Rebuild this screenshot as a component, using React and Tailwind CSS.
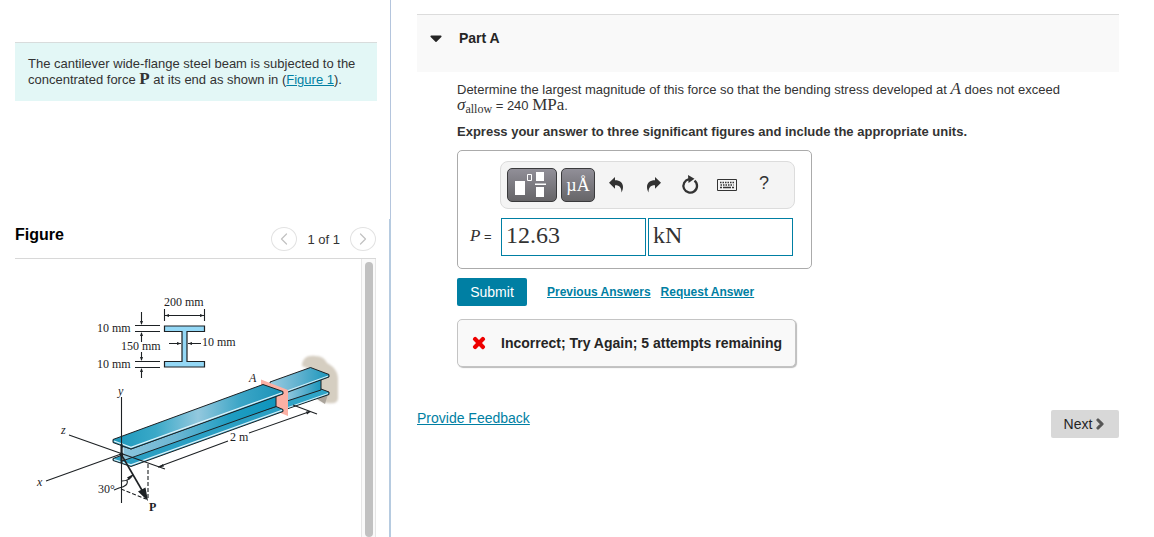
import React, { useState } from 'react';
import { FaCaretDown, FaChevronRight, FaTimes } from 'react-icons/fa';
import { ChevronLeft, ChevronRight } from 'lucide-react';

const MATH = "font-['Liberation_Serif',serif]";
const INLINE_MATH = `${MATH} text-[17px] leading-[12px]`;

function BeamFigure() {
  return (
    <svg
      viewBox="15 259 346 278"
      className="w-[346px] h-[278px] shrink-0 font-['Liberation_Serif',serif] text-[12px]"
      role="img"
      aria-label="Cantilever wide-flange beam with force P at its end"
    >
      <defs>
        <linearGradient id="nearTop" x1="0" x2="1">
          <stop offset="0" stopColor="#1c97bb" />
          <stop offset="0.25" stopColor="#3aa9c8" />
          <stop offset="0.5" stopColor="#93c8de" />
          <stop offset="0.75" stopColor="#3ba5c6" />
          <stop offset="1" stopColor="#1b93b8" />
        </linearGradient>
        <linearGradient id="nearWeb" x1="0" x2="1">
          <stop offset="0" stopColor="#8cc4dc" />
          <stop offset="0.35" stopColor="#6db7d3" />
          <stop offset="0.7" stopColor="#1f9dc2" />
          <stop offset="1" stopColor="#0f95bd" />
        </linearGradient>
        <linearGradient id="farTop" x1="0" x2="1">
          <stop offset="0" stopColor="#9acbe0" />
          <stop offset="0.5" stopColor="#5fb1cf" />
          <stop offset="1" stopColor="#1b96bb" />
        </linearGradient>
        <filter id="wallEdge" x="-20%" y="-20%" width="140%" height="140%">
          <feGaussianBlur stdDeviation="0.9" />
        </filter>
      </defs>

      {/* wall */}
      <path
        d="M302 366 C302 358 308 355 315 356 C322 356 325 359 327 363 C333 366 338 371 338 379 V398 C338 403 333 404 327 403 C320 402 316 398 315 394 L312 370 Z"
        fill="#d5cec1"
        filter="url(#wallEdge)"
      />
      <path d="M317 399 L328 394 L325 404 Z" fill="#aaa49b" />

      {/* far part of the beam */}
      <g stroke="#1d2124" strokeWidth="1" strokeLinejoin="round">
        <path d="M284 401 L321 389 L329 392 V394.500 L284 410 Z" fill="#2fa4c7" />
        <path d="M284 392 L321 379 V390 L284 402 Z" fill="url(#farTop)" />
        <path d="M270 382 L310.500 367.500 L329 374.500 V377 L288 392 L270 387 Z" fill="url(#farTop)" />
      </g>
      <path d="M288 390.500 L328 376 M288 407.500 L328 393.500" stroke="#d9f0f7" strokeWidth="1" />

      {/* section plane at A */}
      <path d="M261 379.500 L288 390 V416 L261 405 Z" fill="#fbb0a4" />

      {/* near part of the beam */}
      <g stroke="#1d2124" strokeWidth="1" strokeLinejoin="round">
        <path d="M113 458.500 L125 454 L276 406.500 L283 409.500 V411.500 L131 466.500 L113 460.500 Z" fill="#2b9fc3" />
        <path d="M122 446 L131 449 L276 396 V406.500 L125 460 L122 461 Z" fill="url(#nearWeb)" />
        <path d="M113 439.500 L263 384.500 L283 391.500 V394 L131 449 L113 442.500 Z" fill="url(#nearTop)" />
      </g>
      <path
        d="M114 441 L131 447.300 L282 392.700 M114 459.500 L131 464.800 L282 410.200 M123 448 V460"
        fill="none"
        stroke="#e3f4fa"
        strokeWidth="1.2"
      />

      {/* axes, force and dimension lines */}
      <g stroke="#1d2124" strokeWidth="1.1" fill="none">
        <path d="M121.500 397 V503" />
        <path d="M121.500 444 V463" strokeWidth="2" />
        <path d="M69 435 L165 469 M46 481 L121 454" />
        <path d="M121 454 L143 492" strokeWidth="1.6" />
        <path d="M148 464 V499 M121 489 L146 499" strokeDasharray="4 2" />
        <path d="M133 475 Q129 481 122 481 M114 490 L119 488 Q129 486 127 480" />
        <path d="M158 467 L228 441 M249 433 L310 411.500 M293 405 L317 414" />
      </g>
      <path d="M148 501 L138 491.500 L145.500 487.500 Z M133.500 474 L129 480 L127 477.500 Z M158 467.500 L163 464 L164 466.500 Z M311 411.300 L306 411.500 L307 414.500 Z" fill="#1d2124" />
      <circle cx="121.500" cy="454.500" r="2" fill="#1d2124" />

      {/* cross-section */}
      <path
        d="M164.500 326 H204.500 V331.500 H187 V361.500 H204.500 V367 H164.500 V361.500 H182 V331.500 H164.500 Z"
        fill="#94d8f6"
        stroke="#1d2124"
        strokeWidth="1.2"
      />
      <g stroke="#1d2124" strokeWidth="1.1" fill="none">
        <path d="M164.500 309 V321 M204.500 309 V321 M165 315.500 H204" />
        <path d="M135 325.500 H160 M135 331.500 H160 M135 361.500 H160 M135 367.500 H160" />
        <path d="M141.500 312 V324 M141.500 333 V342 M141.500 352 V360 M141.500 369 V378" />
        <path d="M169 343.500 H181 M188 343.500 H201" />
      </g>
      <path
        d="M141.500 325 L140 321 H143 Z M141.500 332 L140 336 H143 Z M141.500 361 L140 357 H143 Z M141.500 368 L140 372 H143 Z M181 343.500 L177 342 V345 Z M188 343.500 L192 342 V345 Z M165 315.500 L169 314 V317 Z M204 315.500 L200 314 V317 Z"
        fill="#1d2124"
      />

      <g fill="#1d2124">
        <text x="164" y="306">200 mm</text>
        <text x="97" y="332">10 mm</text>
        <text x="121" y="350">150 mm</text>
        <text x="97" y="368">10 mm</text>
        <text x="202" y="346">10 mm</text>
        <text x="230" y="441">2 m</text>
        <text x="98" y="493">30°</text>
        <g fontStyle="italic">
          <text x="118" y="395">y</text>
          <text x="61" y="434">z</text>
          <text x="37" y="486">x</text>
          <text x="249" y="382">A</text>
        </g>
        <text x="149" y="511" fontWeight="bold">P</text>
      </g>
    </svg>
  );
}

function Sidebar() {
  return (
    <aside className="w-[391px] shrink-0 flex flex-col">
      <div className="h-[219px] pt-[42px] pl-[15px] pr-[13px] border-r border-[#b4c5dd]">
        <p className="border-t border-[#d8dcdc] bg-[#e3f7f6] px-[13px] pt-[13px] pb-[13px] text-[13px] leading-[16px]">
          The cantilever wide-flange steel beam is subjected to the concentrated force{' '}
          <b className={INLINE_MATH}>P</b> at its end as shown in (
          <a href="#figure" className="text-[#007fa3] underline">Figure 1</a>).
        </p>
      </div>
      <section id="figure" className="flex-1 flex flex-col pl-[15px] pr-[13px] border-r-2 border-[#b6cbe0]">
        <div className="h-10 flex items-center border-b border-[#d8d8d8]">
          <h2 className="flex-1 pb-2 text-[16px] leading-[20px] font-bold text-black">Figure</h2>
          <div className="flex items-center gap-[10px] text-[13px]">
            <button aria-label="Previous figure" className="w-[26px] h-6 flex items-center justify-center rounded-[50%] border border-[#e2e2e2] text-[#c2c2c2]">
              <ChevronLeft size={20} strokeWidth={1.5} />
            </button>
            <span className="pt-[3px]">1 of 1</span>
            <button aria-label="Next figure" className="w-[26px] h-6 flex items-center justify-center rounded-[50%] border border-[#e2e2e2] text-[#c2c2c2]">
              <ChevronRight size={20} strokeWidth={1.5} />
            </button>
          </div>
        </div>
        <div className="flex-1 flex justify-between">
          <BeamFigure />
          <div className="w-[15px] shrink-0 flex justify-center pt-[3px] border-x border-[#e6e6e6] bg-[#fafafa]">
            <div className="w-2 rounded-full bg-[#c1c1c1]" />
          </div>
        </div>
      </section>
    </aside>
  );
}

const darkButton =
  'h-[34px] flex items-center justify-center rounded-[5px] border border-[#3a3a3c] bg-linear-to-b from-[#918f98] to-[#666568] text-white';

function Toolbar() {
  return (
    <div className="w-[295px] h-12 flex items-center px-[6px] rounded-lg border border-[#dcdcdc] bg-[#f4f4f4] text-[#333]">
      <button aria-label="Templates" className={`w-[50px] ${darkButton}`}>
        <svg width="34" height="28" viewBox="0 0 34 28">
          <path d="M0 10h10v14H0zM21 1h8v9h-8zM21 16h8v10h-8zM20 12.500h11v1.500H20z" fill="#fff" />
          <path d="M12.500 3.500h4v6h-4z" fill="none" stroke="#fff" />
        </svg>
      </button>
      <button aria-label="Units" className={`w-[34px] ml-1 ${darkButton} ${MATH} text-[18px]`}>µÅ</button>
      <button aria-label="Undo" className="w-[14px] ml-[14px]">
        <svg width="14" height="16" viewBox="0 0 14 16" fill="currentColor">
          <path d="M6 0v3.200c5 0 8 2.600 8 6.800 0 2.200-.7 4-1.600 5.500.2-4.600-1.600-7.200-6.400-7.200v3.400L0 5.800z" />
        </svg>
      </button>
      <button aria-label="Redo" className="w-[14px] ml-[24px]">
        <svg width="14" height="16" viewBox="0 0 14 16" fill="currentColor">
          <path d="M8 0v3.200c-5 0-8 2.600-8 6.800 0 2.200.7 4 1.600 5.500C1.400 10.900 3.200 8.300 8 8.300v3.400l6-5.900z" />
        </svg>
      </button>
      <button aria-label="Reset" className="w-[18px] ml-[20px]">
        <svg width="18" height="20" viewBox="0 0 18 20">
          <path d="M13.500 5.600A6.800 6.800 0 1 1 8 4.200" fill="none" stroke="currentColor" strokeWidth="2.300" />
          <path d="M7 0l6.500 3.800L7.500 8z" fill="currentColor" />
        </svg>
      </button>
      <button aria-label="Keyboard" className="w-5 ml-[18px]">
        <svg width="20" height="12" viewBox="0 0 20 12" stroke="currentColor" fill="none">
          <path d="M.5.5h19v11H.5z" />
          <path d="M3 3.500h14M3.500 6h13" strokeWidth="1.500" strokeDasharray="1.500 1" />
          <path d="M3 8.500h2M6 8.500h8M15 8.500h2" strokeWidth="1.500" />
        </svg>
      </button>
      <button aria-label="Help" className="ml-[21px] w-3 text-[18px] leading-[20px] pb-1">?</button>
    </div>
  );
}

export default function App() {
  const [value, setValue] = useState('12.63');
  const [unit, setUnit] = useState('kN');

  const field = `h-[38px] w-[145px] px-1 pb-[3px] border border-[#007fa3] bg-white ${MATH} text-[24px] text-[#333] outline-none`;

  return (
    <div className="min-h-screen flex bg-white font-['Liberation_Sans',Arial,sans-serif] text-[#333]">
      <Sidebar />
      <main className="flex-1 pt-[14px] pl-[26px] pr-[35px]">
        <h2 className="h-[58px] border-t border-[#dcdcdc] bg-[#f9f9f9]">
          <button className="flex items-center pt-[14px] pl-[13px] text-[14px] leading-[18px] font-bold text-[#252525]">
            <FaCaretDown size={18} className="w-3 mr-[17px]" viewBox="0 0 320 512" preserveAspectRatio="xMidYMid slice" />
            Part A
          </button>
        </h2>

        <div className="pl-10 pt-[10px]">
          <p className="text-[13px] leading-[16px]">
            Determine the largest magnitude of this force so that the bending stress developed at{' '}
            <i className={INLINE_MATH}>A</i> does not exceed
            <br />
            <i className={INLINE_MATH}>σ</i>
            <sub className={`${MATH} text-[12px]`}>allow</sub> = 240{' '}
            <span className={INLINE_MATH}>MPa</span>.
          </p>
          <p className="mt-[10px] text-[13px] leading-[16px] font-bold">
            Express your answer to three significant figures and include the appropriate units.
          </p>

          <div className="mt-[10px] w-fit pt-[10px] pb-3 pl-[10px] pr-4 rounded-[5px] border border-[#ababab]">
            <div className="pl-8">
              <Toolbar />
            </div>
            <div className="mt-[9px] flex items-center gap-[2px]">
              <label htmlFor="answer" className="w-[31px] pl-[2px] text-[13px] whitespace-nowrap">
                <i className={INLINE_MATH}>P</i> =
              </label>
              <input id="answer" className={field} value={value} onChange={(e) => setValue(e.target.value)} />
              <input aria-label="Units" className={field} value={unit} onChange={(e) => setUnit(e.target.value)} />
            </div>
          </div>

          <div className="mt-[9px] flex items-center text-[12px] font-bold">
            <button className="h-7 w-[70px] rounded-[2px] bg-[#007fa3] text-[14px] font-normal text-white">Submit</button>
            <a href="#previous" className="ml-5 text-[#007fa3] underline">Previous Answers</a>
            <a href="#request" className="ml-[10px] text-[#007fa3] underline">Request Answer</a>
          </div>

          <div role="alert" className="mt-[13px] w-fit h-12 flex items-center px-[13px] rounded-[5px] border border-[#c4c4c4] bg-[#f9f9f9] shadow-[1px_1px_1px_#bbb] text-[14px] font-bold text-[#252525]">
            <FaTimes size={16} className="mr-[14px] text-[#ee0000]" stroke="currentColor" strokeWidth="40" />
            Incorrect; Try Again; 5 attempts remaining
          </div>
        </div>

        <div className="mt-[43px] flex items-start justify-between text-[14px] leading-[16px]">
          <a href="#feedback" className="text-[#007fa3] underline">Provide Feedback</a>
          <button className="h-7 w-[68px] flex items-center justify-center gap-[2px] rounded-[2px] bg-[#d8d8d8] text-[#252525]">
            Next <FaChevronRight size={12} className="text-[#555]" stroke="currentColor" strokeWidth="50" />
          </button>
        </div>
      </main>
    </div>
  );
}
